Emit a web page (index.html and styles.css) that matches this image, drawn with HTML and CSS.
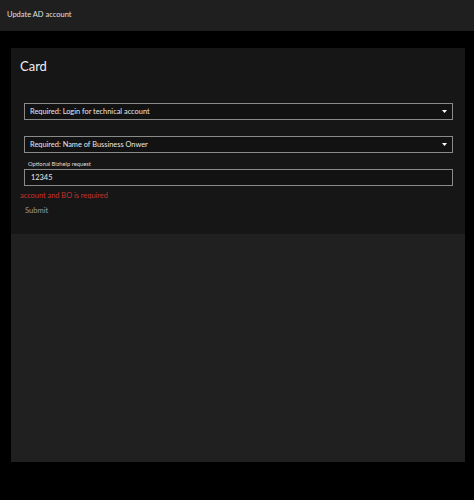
FILE: index.html
```html
<!DOCTYPE html>
<html>
<head>
<meta charset="utf-8">
<link rel="stylesheet" href="styles.css">
</head>
<body>
<header class="topbar">Update AD account</header>
<main class="main">
  <section class="card">
    <div class="card-top">
      <h1 class="card-title">Card</h1>
      <div class="select first">
        <span>Required: Login for technical account</span>
        <svg class="caret" width="5" height="3" viewBox="0 0 5 3"><path d="M0 0h5L2.5 3z" fill="#fff"/></svg>
      </div>
      <div class="select second">
        <span>Required: Name of Bussiness Onwer</span>
        <svg class="caret" width="5" height="3" viewBox="0 0 5 3"><path d="M0 0h5L2.5 3z" fill="#fff"/></svg>
      </div>
      <label class="field-label">Optional Bizhelp request</label>
      <div class="input"><span>12345</span></div>
      <div class="error">account and BO is required</div>
      <div class="submit">Submit</div>
    </div>
    <div class="card-bottom"></div>
  </section>
</main>
</body>
</html>
```

FILE: styles.css
```css
html, body {
  margin: 0;
  padding: 0;
  background: #000;
  font-family: Lato, "Noto Sans", sans-serif;
  color: #e6e6e6;
}
.topbar {
  height: 31px;
  background: #1f1f1f;
  box-sizing: border-box;
  padding-left: 7px;
  font-size: 7.5px;
  line-height: 30px;
  color: #e0e0e0;
}
.main {
  padding: 17px 9px 0 11px;
}
.card {
  display: flex;
  flex-direction: column;
  width: 454px;
}
.card-top {
  background: #161616;
  height: 186px;
  box-sizing: border-box;
  padding: 9px 12px 0 13px;
  display: flex;
  flex-direction: column;
}
.card-title {
  margin: 0 0 0 -4px;
  font-size: 13px;
  font-weight: normal;
  line-height: 19px;
  color: #f0f0f0;
}
.select, .input {
  height: 17px;
  box-sizing: border-box;
  border: 1px solid #8a8a8a;
  background: #121212;
  display: flex;
  align-items: center;
  justify-content: space-between;
  padding: 0 5px 0 5px;
  font-size: 7.4px;
  color: #e8e8e8;
}
.select.first { margin-top: 27px; }
.select.second { margin-top: 16px; }
.field-label {
  margin: 6px 0 0 4px;
  font-size: 5.8px;
  line-height: 10px;
  color: #dedede;
}
.input { padding-left: 6px; }
.error {
  margin: 4px 0 0 -4px;
  font-size: 7.4px;
  line-height: 11px;
  color: #c8322c;
}
.submit {
  margin: 4px 0 0 1px;
  font-size: 7.6px;
  line-height: 11px;
  color: #9a9a9a;
}
.card-bottom {
  background: #202020;
  height: 228px;
}
```
